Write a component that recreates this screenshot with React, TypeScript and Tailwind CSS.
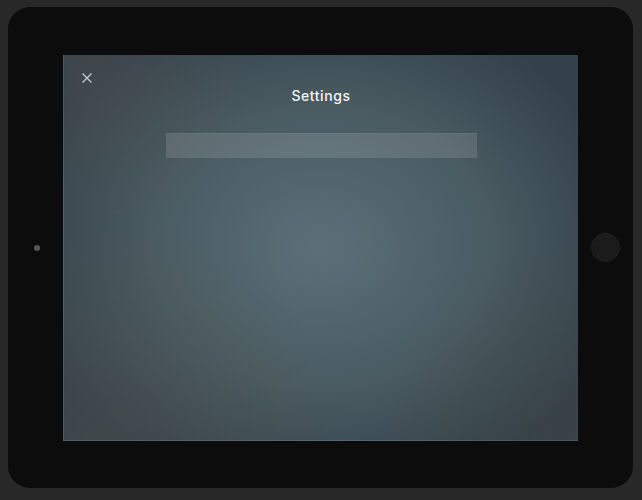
const App = () => {
  return (
    <div className="w-[642px] h-[500px] bg-[#282828] pt-[7px] pl-[8px] font-['Inter','Noto_Sans',sans-serif]">
      <div className="w-[625px] h-[481px] rounded-[22px] bg-[#0c0c0c] flex items-center">
        {/* camera */}
        <div className="w-[57px] flex justify-center">
          <div className="w-[6px] h-[6px] rounded-full bg-[#555555]" />
        </div>

        {/* screen */}
        <div className="-ml-[2px] w-[515px] h-[386px] border-b border-l border-white/[0.12] bg-[radial-gradient(circle_at_6%_6%,rgba(95,88,84,0.28),transparent_26%),radial-gradient(circle_at_8%_100%,rgba(88,84,72,0.32),transparent_38%),radial-gradient(circle_at_100%_100%,rgba(72,72,66,0.3),transparent_32%),radial-gradient(ellipse_60%_66%_at_50%_50%,#5a7078_0%,#4a5b62_55%,#33414a_100%)] flex flex-col pt-[18px]">
          <button className="ml-[18px] w-[10px] h-[10px] text-[#c9ced1]">
            <svg viewBox="0 0 10 10" width="10" height="10" fill="none" stroke="currentColor" strokeWidth="1.2">
              <path d="M0.5 0.5 L9.5 9.5 M9.5 0.5 L0.5 9.5" />
            </svg>
          </button>
          <h1 className="mt-[4px] text-center text-[14px] leading-[18px] font-medium tracking-[0.04em] text-[#f2f4f5]">
            Settings
          </h1>
          <div className="mt-[28px] mx-auto w-[311px] h-[25px] bg-white/[0.12] border-t border-white/[0.05]" />
        </div>

        {/* home button */}
        <div className="w-[55px] flex justify-center">
          <div className="w-[29px] h-[29px] rounded-full bg-[#1b1b1b] border border-[#222222]" />
        </div>
      </div>
    </div>
  );
};

export default App;
